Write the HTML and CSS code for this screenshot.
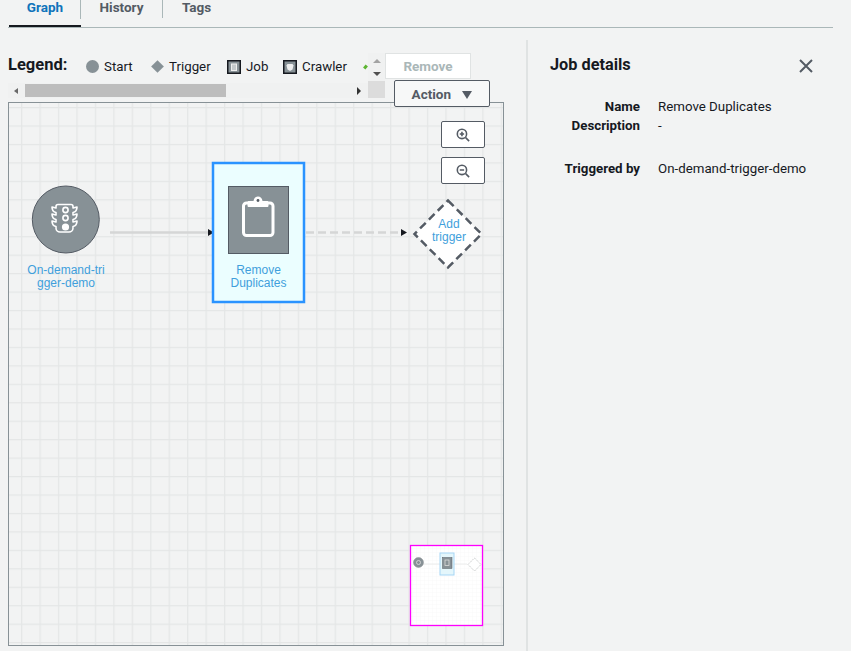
FILE: index.html
```html
<!DOCTYPE html>
<html lang="en">
<head>
    <meta charset="UTF-8">
    <title>Job graph</title>
    <link rel="stylesheet" href="styles.css">
</head>
<body>

    <!-- Tabs -->
    <div class="tabs">
        <div class="tab tab-active">Graph</div>
        <div class="tab tab-mid">History</div>
        <div class="tab tab-last">Tags</div>
    </div>

    <div class="main-row">

        <!-- Graph Section -->
        <div class="graph-pane">
            <div class="toolbar">
                <div class="legend-box">
                    <div class="legend-row">
                        <span class="legend-title">Legend:</span>
                        <span class="legend-item item-start"><i class="dot"></i>Start</span>
                        <span class="legend-item item-trigger"><i class="diamond"></i>Trigger</span>
                        <span class="legend-item item-job">
                            <svg class="legend-icon" viewBox="0 0 14 14"><rect x=".75" y=".75" width="12.5" height="12.5" fill="#879196" stroke="#16191f" stroke-width="1.5"/><rect x="4.5" y="4" width="5" height="6.5" fill="#c4c9cb" stroke="#eee"/></svg>Job
                        </span>
                        <span class="legend-item item-crawler">
                            <svg class="legend-icon" viewBox="0 0 14 14"><rect x=".75" y=".75" width="12.5" height="12.5" fill="#879196" stroke="#16191f" stroke-width="1.5"/><path d="M4.500 4h5l1 1.500-1 4-2.500 1.500-2.500-1.500-1-4z" fill="#eee"/></svg>Crawler
                        </span>
                        <span class="legend-clip"></span>
                    </div>
                    <div class="scroll-x">
                        <span class="arrow-left"></span>
                        <span class="scroll-thumb"></span>
                        <span class="arrow-right"></span>
                    </div>
                </div>
                <div class="scroll-y">
                    <span class="arrow-up"></span>
                    <span class="arrow-down"></span>
                    <span class="scroll-corner"></span>
                </div>
                <button class="btn-remove">Remove</button>
            </div>

            <button class="btn-action">Action <i class="caret"></i></button>

            <div class="canvas">
                <svg class="graph" viewBox="9 103 494 542">
                    <defs>
                        <pattern id="grid" x="21" y="107" width="18.45" height="18.45" patternUnits="userSpaceOnUse">
                            <path d="M.7 0V18.45M0 .7H18.45" fill="none" stroke="#e4e6e6" stroke-width="1.2"/>
                        </pattern>
                        <pattern id="mini-grid" width="4" height="4" patternUnits="userSpaceOnUse">
                            <path d="M0 4V0H4" fill="none" stroke="#f3f4f4" stroke-width=".6"/>
                        </pattern>
                    </defs>
                    <rect x="9" y="103" width="494" height="542" fill="url(#grid)"/>

                    <!-- edges -->
                    <path d="M110 232.500H208" stroke="#d5d6d6" stroke-width="2.500"/>
                    <path d="M208 229l6 3.500-6 3.500z" fill="#16191f"/>
                    <path d="M306 232.500H401" stroke="#d5d6d6" stroke-width="2.500" stroke-dasharray="8 4"/>
                    <path d="M401 229l6 3.500-6 3.500z" fill="#16191f"/>

                    <!-- trigger node -->
                    <circle cx="65.800" cy="219.500" r="33.500" fill="#879196" stroke="#545b64"/>
                    <g fill="none" stroke="#fff" stroke-width="1.600" stroke-linejoin="round">
                        <path d="M60 204.500h11c1.500 0 2 .8 2 2v1.500l4-1c0 3-1.500 5-4 5.500v2.500l4-1c0 3-1.500 5-4 5.500v2.500l4-1c0 3-1.500 5-4 5.500v1.500c0 2.500-2 4-4 4h-9c-2 0-4-1.500-4-4v-1.500c-2.500-.5-4-2.500-4-5.500l4 1v-2.500c-2.500-.5-4-2.500-4-5.500l4 1v-2.500c-2.500-.5-4-2.500-4-5.500l4 1v-1.500c0-1.200.5-2 2-2z"/>
                        <circle cx="65.500" cy="210" r="2.600"/>
                        <circle cx="65.500" cy="218" r="2.600"/>
                    </g>
                    <circle cx="65.500" cy="227" r="3.600" fill="#fff"/>
                    <text class="node-label" x="66" y="274">On-demand-tri</text>
                    <text class="node-label" x="66" y="287">gger-demo</text>

                    <!-- job node -->
                    <rect x="213" y="163" width="91" height="139" fill="#ebfeff" stroke="#2a93ff" stroke-width="2.500"/>
                    <rect x="228.500" y="186.500" width="60" height="67" fill="#879196" stroke="#545b64"/>
                    <rect x="243.500" y="203" width="29.500" height="32.500" rx="3" fill="none" stroke="#fff" stroke-width="3"/>
                    <path d="M249 201h4.500c.5-3 2-4.500 4.500-4.500s4 1.500 4.500 4.500h4.500c1 0 1.500 .5 1.500 1.500v3c0 1-.5 1.500-1.500 1.500h-18c-1 0-1.500-.5-1.500-1.500v-3c0-1 .5-1.500 1.500-1.500z" fill="#fff"/>
                    <circle cx="258" cy="200.500" r="1.400" fill="#545b64"/>
                    <text class="node-label" x="258.500" y="274">Remove</text>
                    <text class="node-label" x="258.500" y="287">Duplicates</text>

                    <!-- add trigger -->
                    <path d="M448 200.500L481.500 234 448 267.500 414.500 234z" fill="#fff" stroke="#545b64" stroke-width="2.500" stroke-dasharray="8 4.500"/>
                    <text class="node-label" x="449" y="228">Add</text>
                    <text class="node-label" x="449" y="241">trigger</text>

                    <!-- minimap -->
                    <rect x="410.500" y="545.500" width="72" height="80" fill="#fff"/>
                    <rect x="410.500" y="545.500" width="72" height="80" fill="url(#mini-grid)" stroke="#f0f" stroke-width="1.300"/>
                    <path d="M424 564H467" stroke="#e6e7e7" stroke-width=".8"/>
                    <circle cx="418.500" cy="562.500" r="5" fill="#879196" stroke="#8a8f92" stroke-width=".5"/>
                    <circle cx="418.500" cy="562.500" r="2" fill="none" stroke="#ddd" stroke-width=".8"/>
                    <rect x="440" y="553" width="14" height="22" fill="#e4f6fb" stroke="#a6d6f5" stroke-width="1"/>
                    <rect x="442.500" y="557.500" width="9.500" height="11" fill="#879196" stroke="#545b64" stroke-width=".5"/>
                    <rect x="445" y="560" width="4" height="5.500" fill="none" stroke="#ddd" stroke-width=".8"/>
                    <path d="M474.500 558l6.500 6.500-6.500 6.500-6.500-6.500z" fill="#fff" stroke="#bfc2c2" stroke-width=".8" stroke-dasharray="1.600 .8"/>
                </svg>

                <button class="btn-zoom btn-zoom-in">
                    <svg class="zoom-icon" viewBox="0 0 16 16"><circle cx="6.800" cy="6.800" r="5.300"/><path d="M11 11l4 4M4.300 6.800h5M6.800 4.300v5"/></svg>
                </button>
                <button class="btn-zoom btn-zoom-out">
                    <svg class="zoom-icon" viewBox="0 0 16 16"><circle cx="6.800" cy="6.800" r="5.300"/><path d="M11 11l4 4M4.300 6.800h5"/></svg>
                </button>
            </div>
        </div>

        <!-- Details Section -->
        <div class="details-pane">
            <div class="details-head">
                <h2 class="details-title">Job details</h2>
                <svg class="close-icon" viewBox="0 0 14 14"><path d="M1 1l12 12M13 1L1 13"/></svg>
            </div>
            <div class="details-grid">
                <span class="detail-key">Name</span><span class="detail-val">Remove Duplicates</span>
                <span class="detail-key">Description</span><span class="detail-val">-</span>
                <span class="detail-key detail-gap">Triggered by</span><span class="detail-val detail-gap">On-demand-trigger-demo</span>
            </div>
        </div>
    </div>

</body>
</html>
```

FILE: styles.css
```css
/* Global Styles */
body {
    font-family: Roboto, 'Noto Sans', sans-serif;
    background-color: #f2f3f3;
    color: #16191f;
    margin: 0;
    width: 851px;
    height: 651px;
    overflow: hidden;
    font-size: 13.3px;
}

button {
    font-family: inherit;
    background: #fff;
    padding: 0;
}

/* Tabs */
.tabs {
    display: flex;
    height: 27px;
    margin: 0 18px 0 8px;
    border-bottom: 1px solid #aab7b8;
    font-weight: 700;
    color: #545b64;
    font-size: 13.5px;
}
.tab {
    height: 18px;
    line-height: 14px;
    text-align: center;
}
.tab-active {
    position: relative;
    width: 72px;
    height: 25px;
    margin-left: 1px;
    color: #0f73bb;
    border-bottom: 2px solid #16191f;
}
.tab-active::after {
    content: '';
    position: absolute;
    top: 0;
    right: 0;
    height: 19px;
    border-right: 1px solid #aab7b8;
}
.tab-mid {
    width: 81px;
    border-right: 1px solid #aab7b8;
}
.tab-last {
    width: 67px;
}

.main-row {
    display: flex;
    margin-top: 12px;
    height: 611px;
}

/* Graph Section */
.graph-pane {
    position: relative;
    width: 496px;
    margin-left: 8px;
}
.toolbar {
    display: flex;
    height: 62px;
    padding-top: 13px;
    box-sizing: border-box;
}
.legend-box {
    width: 360px;
    overflow: hidden;
}
.legend-row {
    display: flex;
    align-items: center;
    height: 30px;
    padding-bottom: 3px;
    box-sizing: border-box;
}
.legend-title {
    font-size: 16.5px;
    font-weight: 700;
    width: 78px;
    margin-top: -5px;
}
.legend-item {
    display: flex;
    align-items: center;
    gap: 5px;
    color: #16191f;
}
.item-start { width: 65px; }
.item-trigger { width: 76px; }
.item-job { width: 56px; }
.item-crawler { width: 80px; }
.dot {
    width: 13px;
    height: 13px;
    border-radius: 50%;
    background-color: #879196;
}
.diamond {
    width: 9px;
    height: 9px;
    margin: 0 2px;
    background-color: #879196;
    transform: rotate(45deg);
}
.legend-icon {
    width: 14px;
    height: 14px;
}
.legend-clip {
    width: 3px;
    height: 4px;
    margin-left: 1px;
    background-color: #5cb531;
    transform: rotate(40deg);
}

/* Fake scrollbars */
.scroll-x {
    display: flex;
    align-items: center;
    height: 15px;
    background-color: #f0f1f1;
}
.scroll-thumb {
    width: 201px;
    height: 13px;
    background-color: #bdbdbd;
    margin-left: 7px;
}
.arrow-left {
    margin-left: 6px;
    border: 3.500px solid transparent;
    border-left: 0;
    border-right: 4px solid #696969;
}
.arrow-right {
    margin-left: 131px;
    border: 4px solid transparent;
    border-right: 0;
    border-left: 4px solid #333;
}
.scroll-y {
    width: 17px;
    height: 45px;
    display: flex;
    flex-direction: column;
    align-items: center;
    background-color: #f0f1f1;
}
.arrow-up {
    margin-top: 6px;
    border: 4px solid transparent;
    border-top: 0;
    border-bottom: 4px solid #a3a3a3;
}
.arrow-down {
    margin-top: 9px;
    border: 4px solid transparent;
    border-bottom: 0;
    border-top: 4px solid #505050;
}
.scroll-corner {
    margin-top: 5px;
    width: 17px;
    height: 17px;
    background-color: #dcdcdc;
}
.btn-remove {
    width: 86px;
    height: 26px;
    border: 1px solid #e0e3e3;
    color: #aab7b8;
    font-size: 13.5px;
    font-weight: 700;
}

/* Overlay buttons */
.btn-action {
    position: absolute;
    top: 40px;
    left: 386px;
    z-index: 2;
    width: 96px;
    height: 27px;
    background: #f7f8f8;
    border: 1px solid #545b64;
    border-radius: 2px;
    color: #545b64;
    font-size: 13.5px;
    font-weight: 700;
}
.caret {
    display: inline-block;
    margin-left: 8px;
    border: 5.500px solid transparent;
    border-bottom: 0;
    border-top: 8px solid #545b64;
}

/* Canvas */
.canvas {
    position: relative;
    width: 494px;
    height: 542px;
    border: 1px solid #879196;
}
.graph {
    display: block;
    width: 494px;
    height: 542px;
}
.node-label {
    font-family: 'Liberation Sans', Arial, sans-serif;
    font-size: 12px;
    fill: #3f9fdc;
    text-anchor: middle;
}
.btn-zoom {
    position: absolute;
    left: 432px;
    width: 44px;
    height: 27px;
    border: 1px solid #545b64;
    border-radius: 2px;
    display: flex;
    align-items: center;
    justify-content: center;
}
.btn-zoom-in { top: 18px; }
.btn-zoom-out { top: 54px; }
.zoom-icon {
    width: 14px;
    height: 14px;
    fill: none;
    stroke: #545b64;
    stroke-width: 1.800;
}

/* Details Section */
.details-pane {
    width: 300px;
    margin-left: 22px;
    border-left: 2px solid #e0e3e3;
    padding-left: 22px;
}
.details-head {
    display: flex;
    align-items: center;
    justify-content: space-between;
    margin-top: 13px;
    height: 22px;
    width: 263px;
}
.details-title {
    margin: 0;
    font-size: 16.3px;
    font-weight: 700;
}
.close-icon {
    width: 14px;
    height: 14px;
    margin-top: 3px;
    fill: none;
    stroke: #545b64;
    stroke-width: 2;
}
.details-grid {
    display: grid;
    grid-template-columns: 90px auto;
    column-gap: 18px;
    row-gap: 1px;
    margin-top: 23px;
    line-height: 18px;
}
.detail-key {
    text-align: right;
    font-weight: 700;
}
.detail-val {
    color: #16191f;
}
.detail-gap {
    margin-top: 24px;
}
```
